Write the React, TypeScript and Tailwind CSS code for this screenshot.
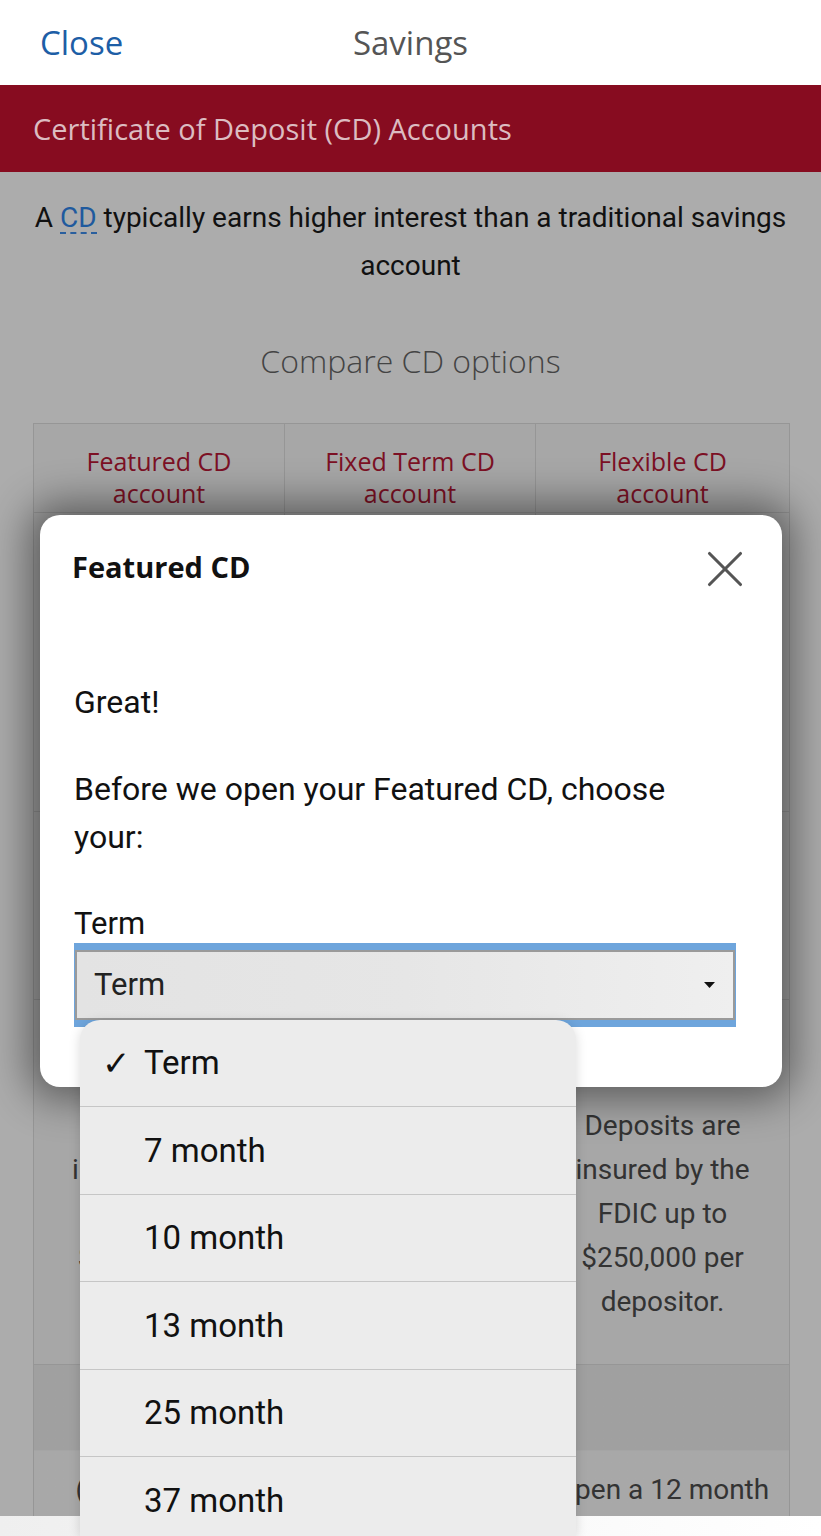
import { X } from "lucide-react";

const OPEN = { fontFamily: '"Open Sans", "Liberation Sans", sans-serif' };
const ROBOTO = { fontFamily: 'Roboto, "Liberation Sans", sans-serif' };

const terms = ["7 month", "10 month", "13 month", "25 month", "37 month"];

function Cell({ children, className = "" }: { children?: React.ReactNode; className?: string }) {
  return (
    <div className={`border-r border-[#969696] last:border-r-0 text-center ${className}`}>{children}</div>
  );
}

function TermDropdown() {
  return (
    <div
      className="absolute left-[80px] top-[1020px] bottom-0 w-[496px] rounded-t-[20px] bg-[#ececec] shadow-[0_2px_12px_rgba(0,0,0,0.15)] overflow-hidden"
      style={ROBOTO}
    >
      <div className="h-[87px] flex items-center border-b border-[#c6c6c6] pl-[22px] text-[33px] text-[#111]">
        <span className="w-[42px] text-[34px] font-medium">✓</span>
        <span>Term</span>
      </div>
      {terms.map((t) => (
        <div
          key={t}
          className="h-[87.5px] flex items-center border-b border-[#c6c6c6] pl-[64px] text-[33px] text-[#111]"
        >
          {t}
        </div>
      ))}
    </div>
  );
}

function FeaturedModal() {
  return (
    <div className="absolute left-[40px] top-[515px] w-[742px] h-[572px] rounded-[20px] bg-white shadow-[0_0_40px_12px_rgba(0,0,0,0.45)] px-[33px] pt-[35px]">
      <h2 className="text-[29px] font-bold text-[#111] leading-[34px] -ml-px" style={OPEN}>
        Featured CD
      </h2>
      <button type="button" aria-label="Close" className="absolute left-[654px] top-[23px]">
        <X className="w-[62px] h-[62px] text-[#555]" strokeWidth={1.2} />
      </button>
      <div style={ROBOTO} className="text-[32px] text-[#111] pl-px">
        <p className="mt-[94px] leading-[48px]">Great!</p>
        <p className="mt-[39px] leading-[48px] w-[610px]">Before we open your Featured CD, choose your:</p>
        <p className="mt-[46px] leading-[34px] text-[31px]">Term</p>
        <div className="mt-[2px] bg-[#6ea5dc] px-px py-[7px] w-[662px]">
          <div className="h-[70px] flex items-center justify-between border-2 border-[#9a9a9a] bg-gradient-to-r from-[#e3e3e3] via-[#e6e6e6] to-[#efefef] pl-[17px] pr-[18px]">
            <span className="text-[31px] text-[#222]">Term</span>
            <svg width="11" height="6" viewBox="0 0 11 6">
              <path d="M0 0 H11 L5.5 6 Z" fill="#111" />
            </svg>
          </div>
        </div>
      </div>
    </div>
  );
}

export default function App() {
  return (
    <div className="relative w-[821px] h-[1536px] overflow-hidden bg-white flex flex-col">
      <header className="h-[85px] shrink-0 flex items-center relative text-[33px]" style={OPEN}>
        <span className="pl-[40px] text-[#1d5ea6]">Close</span>
        <span className="absolute left-0 right-0 text-center text-[#555] pointer-events-none">Savings</span>
      </header>
      <div className="h-[87px] shrink-0 bg-[#870c20] flex items-center pl-[33px]" style={OPEN}>
        <span className="text-[29px] text-[#dcbcc1]">Certificate of Deposit (CD) Accounts</span>
      </div>
      <main className="flex-1 bg-[#acacac] flex flex-col">
        <p className="text-center text-[28px] leading-[48px] text-[#111] pt-[22px] px-[10px]" style={ROBOTO}>
          A{" "}
          <span className="text-[#1f5a9e] border-b-2 border-dashed border-[#2a5f9e] leading-[28px] inline-block">
            CD
          </span>{" "}
          typically earns higher interest than a traditional savings account
        </p>
        <h3 className="text-center text-[32px] font-light text-[#444] mt-[47px]" style={OPEN}>
          Compare CD options
        </h3>
        <div className="mx-[33px] mt-[38px] w-[757px] border-l border-r border-t border-[#969696] bg-[#a7a7a7] flex-1 flex flex-col">
          <div className="grid grid-cols-[251px_251px_1fr] h-[89px] border-b border-[#969696]" style={OPEN}>
            <Cell className="pt-[21px] text-[25px] leading-[32px] text-[#7c1024]">Featured CD<br />account</Cell>
            <Cell className="pt-[21px] text-[25px] leading-[32px] text-[#7c1024]">Fixed Term CD<br />account</Cell>
            <Cell className="pt-[21px] text-[25px] leading-[32px] text-[#7c1024]">Flexible CD<br />account</Cell>
          </div>
          <div className="grid grid-cols-[251px_251px_1fr] h-[299px] border-b border-[#969696]">
            <Cell />
            <Cell />
            <Cell />
          </div>
          <div className="grid grid-cols-[251px_251px_1fr] h-[188px] border-b border-[#969696]">
            <Cell />
            <Cell />
            <Cell />
          </div>
          <div
            className="grid grid-cols-[251px_251px_1fr] h-[365px] border-b border-[#969696] text-[28px] leading-[44px] text-[#333]"
            style={ROBOTO}
          >
            {[0, 1, 2].map((i) => (
              <Cell key={i} className="pt-[104px] px-[20px]">
                Deposits are insured by the FDIC up to $250,000 per depositor.
              </Cell>
            ))}
          </div>
          <div className="grid grid-cols-[251px_251px_1fr] flex-1 text-[28px] leading-[44px] text-[#333]" style={ROBOTO}>
            <Cell className="pt-[103px] bg-gradient-to-b from-[#a0a0a0] from-[56%] to-[#a8a8a8] to-[57%]">(7-month CD)</Cell>
            <Cell className="pt-[103px] bg-gradient-to-b from-[#a0a0a0] from-[56%] to-[#a8a8a8] to-[57%]">Open a 10 month</Cell>
            <Cell className="pt-[103px] bg-gradient-to-b from-[#a0a0a0] from-[56%] to-[#a8a8a8] to-[57%]">Open a 12 month</Cell>
          </div>
        </div>
      </main>
      <div className="h-[20px] shrink-0 bg-gradient-to-r from-[#efefef] to-white" />
      <FeaturedModal />
      <TermDropdown />
    </div>
  );
}
